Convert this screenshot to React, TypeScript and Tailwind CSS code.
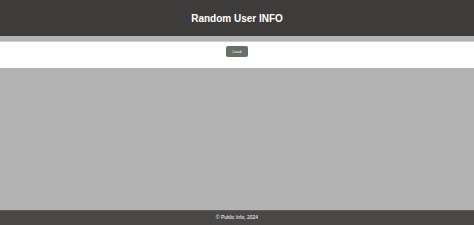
export default function App() {
  return (
    <div className="w-screen h-screen flex flex-col bg-[#b3b3b3] font-['Liberation_Sans',Arial,sans-serif]">
      {/* header */}
      <div className="h-[36px] bg-[#3e3c3a] flex items-center justify-center pt-[1px]">
        <h1 className="text-white font-bold text-[10px]">Random User INFO</h1>
      </div>

      {/* toolbar strip */}
      <div className="h-[6px] bg-[#b3b3b3] border-b border-[#cfcfcf]" />

      {/* load panel */}
      <div className="h-[26px] bg-white flex justify-center pt-[4px]">
        <button className="w-[22px] h-[11px] rounded-[2px] bg-[#667068] text-white text-[4px] leading-none flex items-center justify-center">
          Load
        </button>
      </div>

      {/* content */}
      <div className="flex-1 bg-[#b3b3b3]" />

      {/* footer */}
      <div className="h-[15px] bg-[#4a4747] border-t border-[#5e5b5b] flex items-center justify-center">
        <span className="text-white text-[5px]">© Public Info, 2024</span>
      </div>
    </div>
  );
}
